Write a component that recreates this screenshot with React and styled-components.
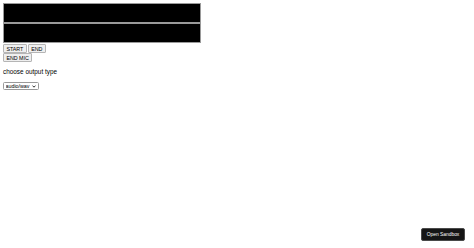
import { useState } from "react";
import styled, { createGlobalStyle } from "styled-components";

const Global = createGlobalStyle`
  html, body {
    margin: 0;
    background: #fff;
  }
  body {
    padding: 3px;
    font-family: "Liberation Sans", Arial, sans-serif;
    font-size: 6.4px;
    color: #000;
  }
`

const Canvas = styled.canvas`
  display: block;
  width: 198px;
  height: 20px;
  background: #000;
  border: 1px solid #9a9a9a;
  box-sizing: border-box;
`

const Row = styled.div`
  display: flex;
  gap: 1px;
  margin-top: ${props => props.top || 0}px;
`

const Btn = styled.button`
  font-family: "Liberation Sans", Arial, sans-serif;
  font-size: 5.33px;
  line-height: 6px;
  padding: 0 2.4px;
  height: 9px;
  background: #efefef;
  color: #000;
  border: 1px solid #b5b5b5;
  border-radius: 1px;
  margin: 0;
`

const Label = styled.p`
  margin: 6.4px 0 0;
  line-height: 7.4px;
`

const SelectWrap = styled.div`
  position: relative;
  display: inline-block;
  margin-top: 6.4px;
`

const Select = styled.select`
  appearance: none;
  display: block;
  font-family: "Liberation Sans", Arial, sans-serif;
  font-size: 5.33px;
  height: 8px;
  width: 36px;
  padding: 0 1.5px;
  border: 1px solid #9a9a9a;
  border-radius: 1.5px;
  background: #fff;
  color: #000;
  outline: none;
`

const Chevron = styled.svg`
  position: absolute;
  right: 3px;
  top: 2.5px;
  width: 4px;
  height: 3px;
  pointer-events: none;
`

const Sandbox = styled.a`
  position: fixed;
  right: 9px;
  bottom: 7px;
  display: flex;
  align-items: center;
  justify-content: center;
  width: 44px;
  height: 13px;
  box-sizing: border-box;
  background: #151515;
  color: #fff;
  font-size: 4.9px;
  border: 1px solid #4a4a4a;
  border-radius: 2px;
  text-decoration: none;
`

const App = () => {
  const [type, setType] = useState("audio/wav");
  return (
    <>
      <Global />
      <Canvas />
      <Canvas />
      <Row top={1}>
        <Btn>START</Btn>
        <Btn>END</Btn>
      </Row>
      <Row>
        <Btn>END MIC</Btn>
      </Row>
      <Label>choose output type</Label>
      <SelectWrap>
        <Select value={type} onChange={e => setType(e.target.value)}>
          <option>audio/wav</option>
          <option>audio/mp3</option>
          <option>audio/webm</option>
        </Select>
        <Chevron viewBox="0 0 8 6">
          <path d="M1 1.2 L4 4.4 L7 1.2" fill="none" stroke="#000" strokeWidth="1.6" />
        </Chevron>
      </SelectWrap>
      <Sandbox href="#">Open Sandbox</Sandbox>
    </>
  );
};

export default App;
